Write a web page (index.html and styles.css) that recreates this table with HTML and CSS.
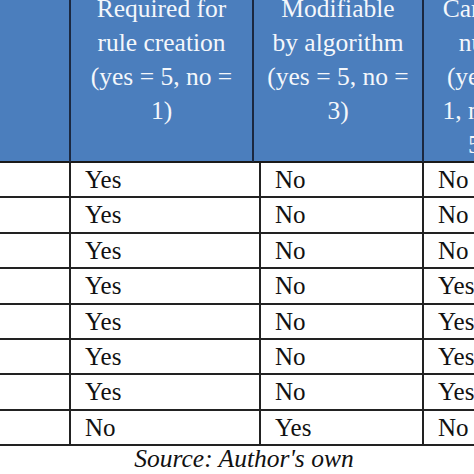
FILE: index.html
```html
<!DOCTYPE html>
<html>
<head>
<meta charset="utf-8">
<link rel="stylesheet" href="styles.css">
</head>
<body>
<div class="table">
  <div class="head">
    <div class="hcell"></div>
    <div class="hcell">Required for<br>rule creation<br>(yes = 5, no =<br>1)</div>
    <div class="hcell">Modifiable<br>by algorithm<br>(yes = 5, no =<br>3)</div>
    <div class="hcell">Can be<br>null<br>(yes =<br>1, no =<br>5)</div>
  </div>
  <div class="row"><div class="cell"></div><div class="cell">Yes</div><div class="cell">No</div><div class="cell">No</div></div>
  <div class="row"><div class="cell"></div><div class="cell">Yes</div><div class="cell">No</div><div class="cell">No</div></div>
  <div class="row"><div class="cell"></div><div class="cell">Yes</div><div class="cell">No</div><div class="cell">No</div></div>
  <div class="row"><div class="cell"></div><div class="cell">Yes</div><div class="cell">No</div><div class="cell">Yes</div></div>
  <div class="row"><div class="cell"></div><div class="cell">Yes</div><div class="cell">No</div><div class="cell">Yes</div></div>
  <div class="row"><div class="cell"></div><div class="cell">Yes</div><div class="cell">No</div><div class="cell">Yes</div></div>
  <div class="row"><div class="cell"></div><div class="cell">Yes</div><div class="cell">No</div><div class="cell">Yes</div></div>
  <div class="row"><div class="cell"></div><div class="cell">No</div><div class="cell">Yes</div><div class="cell">No</div></div>
  <div class="caption">Source: Author's own</div>
</div>
</body>
</html>
```
FILE: styles.css
```css
html, body {
  margin: 0;
  padding: 0;
  background: #ffffff;
  overflow: hidden;
  width: 474px;
  height: 474px;
}

.table {
  width: 578px;
  margin-left: -45px;
  margin-top: -9px;
  font-family: "Liberation Serif", "Times New Roman", serif;
}

.head {
  display: grid;
  grid-template-columns: 114px 183px 170px 111px;
  height: 170px;
  background: #4b7ebd;
  border-bottom: 2px solid #1a1a1a;
}

.hcell {
  color: #f4f7fb;
  font-size: 25.5px;
  line-height: 34px;
  text-align: center;
  padding-top: 1px;
  box-sizing: border-box;
}

.hcell + .hcell {
  border-left: 2px solid #1b2840;
}

.row {
  display: grid;
  grid-template-columns: 114px 190px 163px 111px;
  height: 35.4px;
  box-sizing: border-box;
  border-bottom: 2px solid #222222;
}

.cell {
  font-size: 25px;
  line-height: 33.4px;
  color: #111111;
  padding-left: 14px;
  box-sizing: border-box;
}

.cell + .cell {
  border-left: 2px solid #222222;
}

.caption {
  font-style: italic;
  font-size: 25.5px;
  line-height: 26px;
  text-align: center;
  color: #111111;
}
```
